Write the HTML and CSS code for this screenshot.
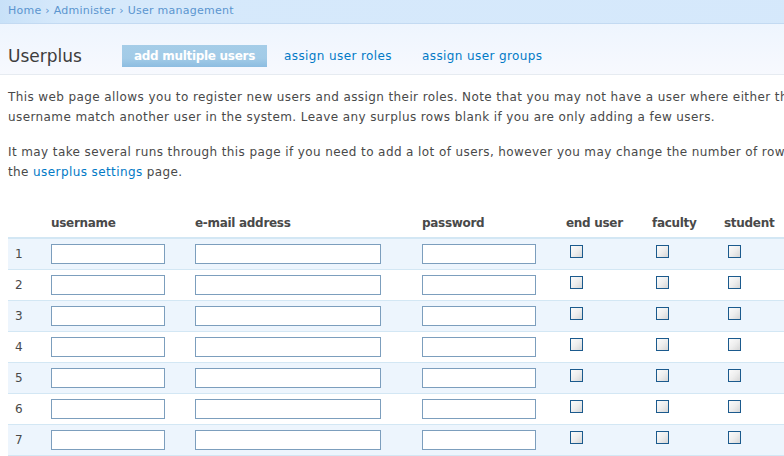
FILE: index.html
```html
<!DOCTYPE html>
<html>
<head>
<meta charset="utf-8">
<title>Userplus</title>
<link rel="stylesheet" href="styles.css">
</head>
<body>
<div class="page">
  <div class="breadcrumb"><a href="#">Home</a> › <a href="#">Administer</a> › <a href="#">User management</a></div>
  <div class="titlebar">
    <h2 class="title">Userplus</h2>
    <ul class="tabs">
      <li class="active"><a href="#">add multiple users</a></li>
      <li><a href="#">assign user roles</a></li>
      <li><a href="#">assign user groups</a></li>
    </ul>
  </div>
  <div class="content">
    <p>This web page allows you to register new users and assign their roles. Note that you may not have a user where either the e-mail address or<br>username match another user in the system. Leave any surplus rows blank if you are only adding a few users.</p>
    <p>It may take several runs through this page if you need to add a lot of users, however you may change the number of rows displayed on<br>the <a href="#">userplus settings</a> page.</p>
    <table class="users">
      <colgroup>
        <col class="c-num"><col class="c-user"><col class="c-mail"><col class="c-pass"><col class="c-end"><col class="c-fac"><col class="c-stu">
      </colgroup>
      <thead>
        <tr><th></th><th>username</th><th>e-mail address</th><th>password</th><th>end user</th><th>faculty</th><th>student</th></tr>
      </thead>
      <tbody>
        <tr class="odd"><td class="num">1</td><td><input class="short" type="text"></td><td><input class="long" type="text"></td><td><input class="short" type="password"></td><td><input type="checkbox"></td><td><input type="checkbox"></td><td><input type="checkbox"></td></tr>
        <tr class="even"><td class="num">2</td><td><input class="short" type="text"></td><td><input class="long" type="text"></td><td><input class="short" type="password"></td><td><input type="checkbox"></td><td><input type="checkbox"></td><td><input type="checkbox"></td></tr>
        <tr class="odd"><td class="num">3</td><td><input class="short" type="text"></td><td><input class="long" type="text"></td><td><input class="short" type="password"></td><td><input type="checkbox"></td><td><input type="checkbox"></td><td><input type="checkbox"></td></tr>
        <tr class="even"><td class="num">4</td><td><input class="short" type="text"></td><td><input class="long" type="text"></td><td><input class="short" type="password"></td><td><input type="checkbox"></td><td><input type="checkbox"></td><td><input type="checkbox"></td></tr>
        <tr class="odd"><td class="num">5</td><td><input class="short" type="text"></td><td><input class="long" type="text"></td><td><input class="short" type="password"></td><td><input type="checkbox"></td><td><input type="checkbox"></td><td><input type="checkbox"></td></tr>
        <tr class="even"><td class="num">6</td><td><input class="short" type="text"></td><td><input class="long" type="text"></td><td><input class="short" type="password"></td><td><input type="checkbox"></td><td><input type="checkbox"></td><td><input type="checkbox"></td></tr>
        <tr class="odd"><td class="num">7</td><td><input class="short" type="text"></td><td><input class="long" type="text"></td><td><input class="short" type="password"></td><td><input type="checkbox"></td><td><input type="checkbox"></td><td><input type="checkbox"></td></tr>
      </tbody>
    </table>
  </div>
</div>
</body>
</html>
```

FILE: styles.css
```css
html, body {
  margin: 0;
  padding: 0;
  overflow: hidden;
  background: #fff;
}
body {
  font-family: "DejaVu Sans", Verdana, sans-serif;
  font-size: 12px;
  color: #494949;
  letter-spacing: 0.4px;
}
a {
  color: #027ac6;
  text-decoration: none;
}
.page {
  width: 1000px;
}
.breadcrumb {
  height: 24px;
  box-sizing: border-box;
  padding: 3px 8px 0;
  font-size: 11px;
  line-height: 16px;
  letter-spacing: 0.25px;
  color: #5b95cf;
  background: linear-gradient(90deg, #c8e1f8 0, #d6e9fb 60px, #d5e8fb 100%);
  border-bottom: 1px solid #c3daf2;
}
.breadcrumb a {
  color: #5b95cf;
}
.titlebar {
  display: flex;
  align-items: flex-end;
  height: 51px;
  box-sizing: border-box;
  padding: 0 8px 7px;
  background: linear-gradient(180deg, #eef5fe 0, #f7f9fe 100%);
  border-bottom: 1px solid #e6ebf1;
}
.title {
  margin: 0;
  font-size: 17px;
  font-weight: normal;
  letter-spacing: 0;
  color: #3d3d3d;
  line-height: 22px;
  width: 114px;
}
.tabs {
  display: flex;
  list-style: none;
  margin: 0;
  padding: 0;
}
.tabs li a {
  display: block;
  height: 22px;
  line-height: 22px;
  padding: 0 15px;
  color: #027ac6;
}
.tabs li.active a {
  padding: 0 12px;
  color: #fff;
  font-weight: bold;
  letter-spacing: -0.3px;
  background: linear-gradient(180deg, #a5cde8 0, #a2cbe7 60%, #8cbde1 100%);
  margin-right: 2px;
}
.content {
  padding: 0 8px;
  background: #fff;
}
.content p {
  margin: 0;
  padding-top: 12px;
  line-height: 20px;
  white-space: nowrap;
}
.content p + p {
  padding-top: 15px;
}
.users {
  border-collapse: collapse;
  table-layout: fixed;
  margin-top: 33px;
  width: 830px;
}
.c-num { width: 43px; }
.c-user { width: 144px; }
.c-mail { width: 227px; }
.c-pass { width: 144px; }
.c-end { width: 86px; }
.c-fac { width: 72px; }
.c-stu { width: 114px; }
.users th {
  text-align: left;
  font-weight: bold;
  letter-spacing: -0.3px;
  padding: 0 0 6px;
  line-height: 16px;
  border-bottom: 2px solid #d3e7f4;
  color: #494949;
}
.users td {
  padding: 0;
  height: 30px;
  border-bottom: 1px solid #d3e7f4;
  vertical-align: middle;
}
.users tr.odd td {
  background: #edf5fd;
}
.users tr.even td {
  background: #fff;
}
.users td.num {
  padding-left: 7px;
}
.users input[type="text"],
.users input[type="password"] {
  display: block;
  box-sizing: border-box;
  height: 20px;
  margin: -1px 0 0;
  padding: 0 2px;
  border: 1px solid #7c9ebd;
  background: #fff;
  font: inherit;
}
.users input.short { width: 114px; }
.users input.long { width: 186px; }
.users input[type="checkbox"] {
  -webkit-appearance: none;
  appearance: none;
  display: block;
  box-sizing: border-box;
  width: 13px;
  height: 13px;
  margin: -5px 0 0 4px;
  border: 1px solid #1b5a8d;
  border-radius: 0;
  background: linear-gradient(135deg, #fbfbfb 0, #eeeeee 50%, #d6d6d6 100%);
}
```
